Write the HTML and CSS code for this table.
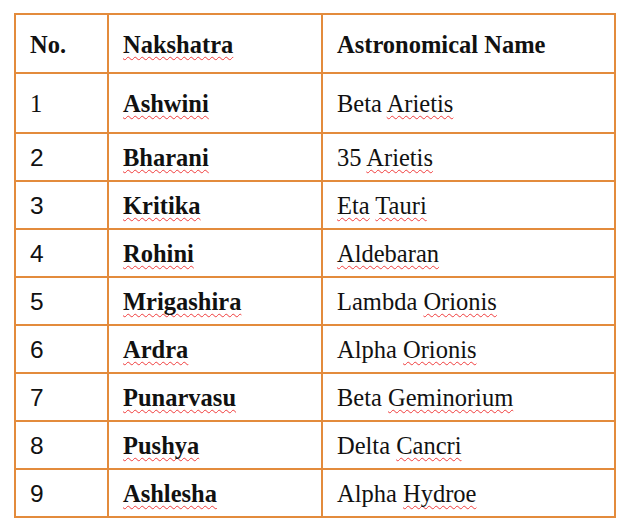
FILE: index.html
```html
<!DOCTYPE html>
<html>
<head>
<meta charset="utf-8">
<link rel="stylesheet" href="styles.css">
</head>
<body>
<table class="nak">
  <colgroup><col class="c1"><col class="c2"><col class="c3"></colgroup>
  <tr class="head"><th>No.</th><th><span class="sp">Nakshatra</span></th><th>Astronomical Name</th></tr>
  <tr class="first"><td class="num serif">1</td><td class="name"><span class="sp">Ashwini</span></td><td>Beta <span class="sp">Arietis</span></td></tr>
  <tr><td class="num">2</td><td class="name"><span class="sp">Bharani</span></td><td>35 <span class="sp">Arietis</span></td></tr>
  <tr><td class="num">3</td><td class="name"><span class="sp">Kritika</span></td><td><span class="sp">Eta</span> <span class="sp">Tauri</span></td></tr>
  <tr><td class="num">4</td><td class="name"><span class="sp">Rohini</span></td><td><span class="sp">Aldebaran</span></td></tr>
  <tr><td class="num">5</td><td class="name"><span class="sp">Mrigashira</span></td><td>Lambda <span class="sp">Orionis</span></td></tr>
  <tr><td class="num">6</td><td class="name"><span class="sp">Ardra</span></td><td>Alpha <span class="sp">Orionis</span></td></tr>
  <tr><td class="num">7</td><td class="name"><span class="sp">Punarvasu</span></td><td>Beta <span class="sp">Geminorium</span></td></tr>
  <tr><td class="num">8</td><td class="name"><span class="sp">Pushya</span></td><td>Delta <span class="sp">Cancri</span></td></tr>
  <tr><td class="num">9</td><td class="name"><span class="sp">Ashlesha</span></td><td>Alpha <span class="sp">Hydroe</span></td></tr>
</table>
</body>
</html>
```
FILE: styles.css
```css
html, body {
  margin: 0;
  background: #ffffff;
}
body {
  padding: 13px 0 0 14px;
  font-family: "Liberation Serif", "Times New Roman", serif;
  font-size: 24.5px;
  color: #111111;
}
.nak {
  border-collapse: collapse;
  width: 600px;
  table-layout: fixed;
}
.c1 { width: 93px; }
.c2 { width: 214px; }
.c3 { width: 293px; }
.nak th, .nak td {
  border: 2px solid #e38b3c;
  padding: 2px 0 0 14px;
  text-align: left;
  vertical-align: middle;
  white-space: nowrap;
  line-height: 28px;
}
.nak th { font-weight: bold; }
.nak tr { height: 48px; }
.nak tr.head { height: 59px; }
.nak tr.first { height: 60px; }
.name { font-weight: bold; }
.num {
  font-family: "Liberation Sans", Arial, sans-serif;
  font-weight: normal;
}
.num.serif {
  font-family: "Liberation Serif", "Times New Roman", serif;
}
.sp {
  text-decoration-line: underline;
  text-decoration-style: wavy;
  text-decoration-color: #f03c3c;
  text-decoration-thickness: 1px;
  text-underline-offset: 3px;
  text-decoration-skip-ink: none;
}
```
